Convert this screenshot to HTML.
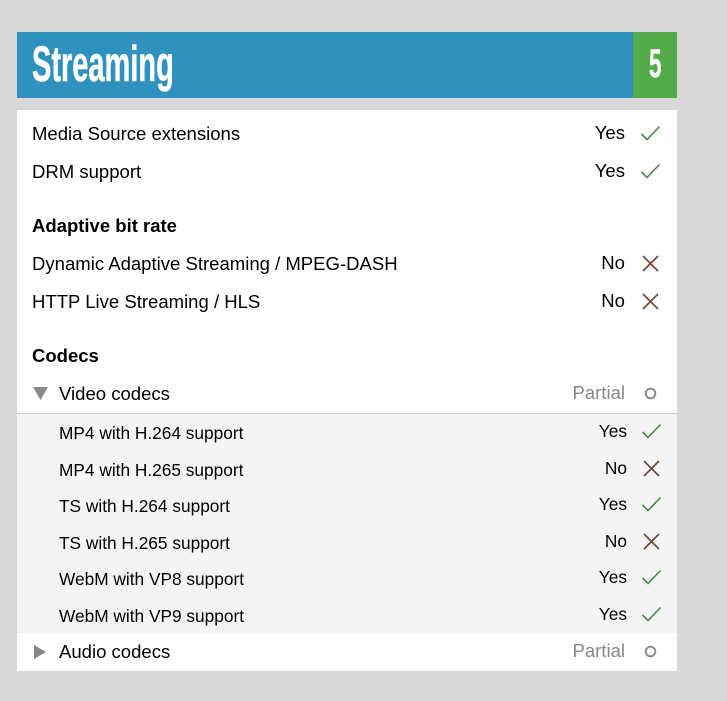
<!DOCTYPE html>
<html><head><meta charset="utf-8">
<style>
html,body{margin:0;padding:0;background:#d8d8d8;}
body{width:727px;height:701px;position:relative;overflow:hidden;font-family:"Liberation Sans",Arial,sans-serif;color:#000;}
.a{position:absolute;white-space:nowrap;}
.m{font-size:18.55px;line-height:22px;}
.s{font-size:17.3px;line-height:20px;}
.r{text-align:right;width:100px;left:525px;}
.b{font-weight:bold;font-size:18.5px;}
.g{color:#888;}
svg{position:absolute;left:0;top:0;}
</style></head><body>
<div class="a" style="left:32px;top:32px;display:none"></div>
<div class="a" style="left:17px;top:32px;width:616px;height:66px;background:#2f91bd"></div>
<div class="a" style="left:633px;top:32px;width:44px;height:66px;background:#53ac49"></div>
<div class="a" style="left:32px;top:34px;font-weight:bold;font-size:50px;line-height:60px;color:#fff;-webkit-text-stroke:.6px #fff;transform:scaleX(.58);transform-origin:0 0;">Streaming</div>
<div class="a" style="left:648.500px;top:44px;font-weight:bold;font-size:40px;line-height:40px;color:#fff;-webkit-text-stroke:.4px #fff;transform:scaleX(.56);transform-origin:0 0;">5</div>
<div class="a" style="left:17px;top:110px;width:660px;height:561px;background:#fff"></div>
<div class="a" style="left:17px;top:413px;width:660px;height:220px;background:#f4f4f4;border-top:1px solid #ccc;box-sizing:border-box"></div>

<div class="a m" style="left:32px;top:123px">Media Source extensions</div><div class="a m r" style="top:122px">Yes</div>
<div class="a m" style="left:32px;top:161px">DRM support</div><div class="a m r" style="top:160px">Yes</div>
<div class="a b" style="left:32px;top:215px;line-height:22px">Adaptive bit rate</div>
<div class="a m" style="left:32px;top:253px">Dynamic Adaptive Streaming / MPEG-DASH</div><div class="a m r" style="top:252px">No</div>
<div class="a m" style="left:32px;top:291px">HTTP Live Streaming / HLS</div><div class="a m r" style="top:290px">No</div>
<div class="a b" style="left:32px;top:345px;line-height:22px">Codecs</div>
<div class="a m" style="left:59px;top:383px">Video codecs</div><div class="a m r g" style="top:382px">Partial</div>

<div class="a s" style="left:59px;top:423px">MP4 with H.264 support</div><div class="a s r" style="left:527px;top:421px">Yes</div>
<div class="a s" style="left:59px;top:460px">MP4 with H.265 support</div><div class="a s r" style="left:527px;top:458px">No</div>
<div class="a s" style="left:59px;top:496px">TS with H.264 support</div><div class="a s r" style="left:527px;top:494px">Yes</div>
<div class="a s" style="left:59px;top:533px">TS with H.265 support</div><div class="a s r" style="left:527px;top:531px">No</div>
<div class="a s" style="left:59px;top:569px">WebM with VP8 support</div><div class="a s r" style="left:527px;top:567px">Yes</div>
<div class="a s" style="left:59px;top:606px">WebM with VP9 support</div><div class="a s r" style="left:527px;top:604px">Yes</div>

<div class="a m" style="left:59px;top:641px">Audio codecs</div><div class="a m r g" style="top:640px">Partial</div>

<svg width="727" height="701" fill="none" stroke-width="1.600">
<g stroke="#4a8748">
<path d="M641.500 134l5.500 5.500 12.500-13"/>
<path d="M641.500 172l5.500 5.500 12.500-13"/>
<path d="M642.500 432l5.500 5.500 12.500-13"/>
<path d="M642.500 505l5.500 5.500 12.500-13"/>
<path d="M642.500 578l5.500 5.500 12.500-13"/>
<path d="M642.500 615l5.500 5.500 12.500-13"/>
</g>
<g stroke="#774238">
<path d="M643 256l15 15M658 256l-15 15"/>
<path d="M643 294l15 15M658 294l-15 15"/>
<path d="M644 461l15 15M659 461l-15 15"/>
<path d="M644 534l15 15M659 534l-15 15"/>
</g>
<g stroke="#8a8a8a" stroke-width="1.900">
<circle cx="650.500" cy="393.500" r="4.800"/>
<circle cx="650.500" cy="651.500" r="4.800"/>
</g>
<path d="M33 387h15l-7.500 13z" fill="#888" stroke="none"/>
<path d="M34 645l12 7-12 7z" fill="#888" stroke="none"/>
</svg>
</body></html>
